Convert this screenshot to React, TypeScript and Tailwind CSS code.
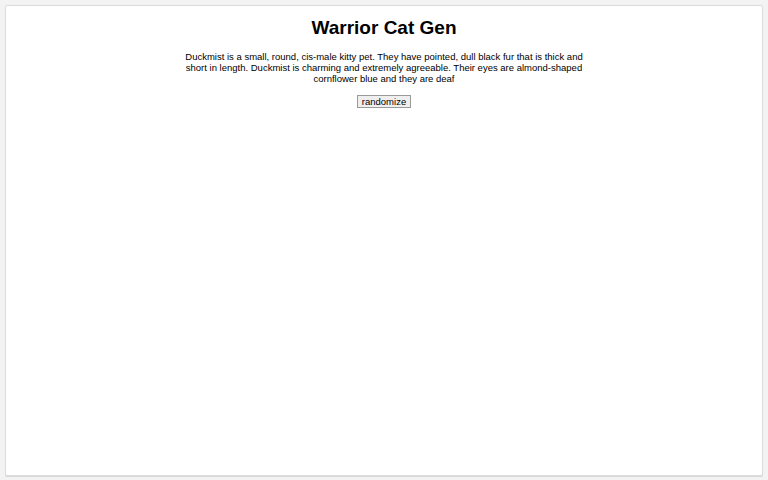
export default function App() {
  return (
    <div className="h-[480px] bg-[#f3f3f3] p-[5px] font-['Liberation_Sans',Arial,sans-serif] text-black">
      <div className="flex h-[471px] flex-col items-center rounded-[2px] border border-[#dcdcdc] bg-white shadow-[0_1px_1px_rgba(0,0,0,0.12)]">
        <h1 className="mt-[10px] text-[19px] leading-[24px] font-bold">Warrior Cat Gen</h1>
        <p className="mt-[11px] w-[404px] text-center text-[9.5px] leading-[11px]">
          Duckmist is a small, round, cis-male kitty pet. They have pointed, dull black fur that is thick and
          short in length. Duckmist is charming and extremely agreeable. Their eyes are almond-shaped
          cornflower blue and they are deaf
        </p>
        <button className="mt-[11px] h-[13px] border border-[#9a9a9a] bg-[#efefef] px-[4px] text-[9.5px] leading-[11px]">
          randomize
        </button>
      </div>
    </div>
  );
}
